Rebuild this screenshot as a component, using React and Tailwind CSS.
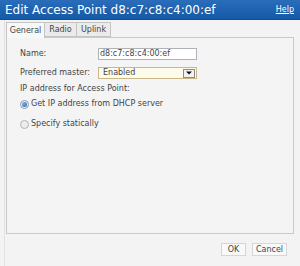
import React from 'react'

function Radio({ checked }) {
  return (
    <span
      className={
        'w-[9px] h-[9px] rounded-full border shrink-0 flex items-center justify-center ' +
        (checked ? 'border-[#8a9bb0] bg-[#eef2f7]' : 'border-[#b5b5b5] bg-[#ececec]')
      }
    >
      {checked && <span className="w-[5px] h-[5px] rounded-full bg-[radial-gradient(circle_at_35%_35%,#7fb0e6,#1f5fae)]" />}
    </span>
  )
}

export default function App() {
  const font = { fontFamily: '"DejaVu Sans", Verdana, sans-serif' }
  return (
    <div className="w-[300px] h-[266px] bg-[#f3f3f3] text-[8px] text-[#444] overflow-hidden flex flex-col" style={font}>
      {/* title bar */}
      <div className="h-[20px] shrink-0 flex items-center justify-between pl-[5px] pr-[6px] bg-gradient-to-b from-[#2a6dba] to-[#135aa7] border-b border-[#0d4f98]">
        <span className="text-white text-[12px] leading-none">Edit Access Point d8:c7:c8:c4:00:ef</span>
        <span className="text-white underline leading-none">Help</span>
      </div>

      <div className="flex-1 flex flex-col border-l border-[#e2e2e2] ml-[4px]">
        <div className="pl-[1px] pr-[6px] pt-[2px]">
          {/* tabs */}
          <div className="flex h-[15px]">
            <div className="w-[39px] border border-b-0 border-[#c4c4c4] bg-[#f8f8f8] flex items-center justify-center relative z-10 h-[16px]">
              General
            </div>
            <div className="w-[32px] border border-l-0 border-[#c4c4c4] bg-[#ebebeb] flex items-center justify-center">
              Radio
            </div>
            <div className="w-[34px] border border-l-0 border-[#c4c4c4] bg-[#ebebeb] flex items-center justify-center">
              Uplink
            </div>
          </div>

          {/* panel */}
          <div className="h-[197px] border border-[#c9c9c9] bg-[#f4f4f4] pl-[13px] pt-[10px]">
            <div className="flex items-center h-[12px]">
              <span className="w-[78px]">Name:</span>
              <div className="w-[99px] h-[12px] border border-[#aeb3b9] bg-white pl-[1px] flex items-center leading-none">
                d8:c7:c8:c4:00:ef
              </div>
            </div>
            <div className="flex items-center h-[12px] mt-[7px]">
              <span className="w-[78px]">Preferred master:</span>
              <div className="w-[99px] h-[12px] border border-[#c8b88a] bg-[#fefbea] pl-[4px] pr-[1px] flex items-center justify-between leading-none">
                <span>Enabled</span>
                <span className="w-[12px] h-[9px] border border-[#8c8c8c] bg-[#f2f2f2] flex items-center justify-center">
                  <svg width="6" height="4" viewBox="0 0 6 4">
                    <path d="M0 0.5 H6 L3 3.5 Z" fill="#111" />
                  </svg>
                </span>
              </div>
            </div>
            <div className="flex items-center h-[12px] mt-[4px]">IP address for Access Point:</div>
            <div className="flex items-center h-[12px] mt-[3px] gap-[2px]">
              <Radio checked />
              <span>Get IP address from DHCP server</span>
            </div>
            <div className="flex items-center h-[12px] mt-[8px] gap-[2px]">
              <Radio />
              <span>Specify statically</span>
            </div>
          </div>
        </div>

        {/* buttons */}
        <div className="flex justify-end gap-[6px] pr-[13px] mt-[9px]">
          <div className="w-[25px] h-[13px] border border-[#d6d6d6] bg-[#f9f9f9] flex items-center justify-center">OK</div>
          <div className="w-[35px] h-[13px] border border-[#d6d6d6] bg-[#f9f9f9] flex items-center justify-center">Cancel</div>
        </div>
      </div>
    </div>
  )
}
